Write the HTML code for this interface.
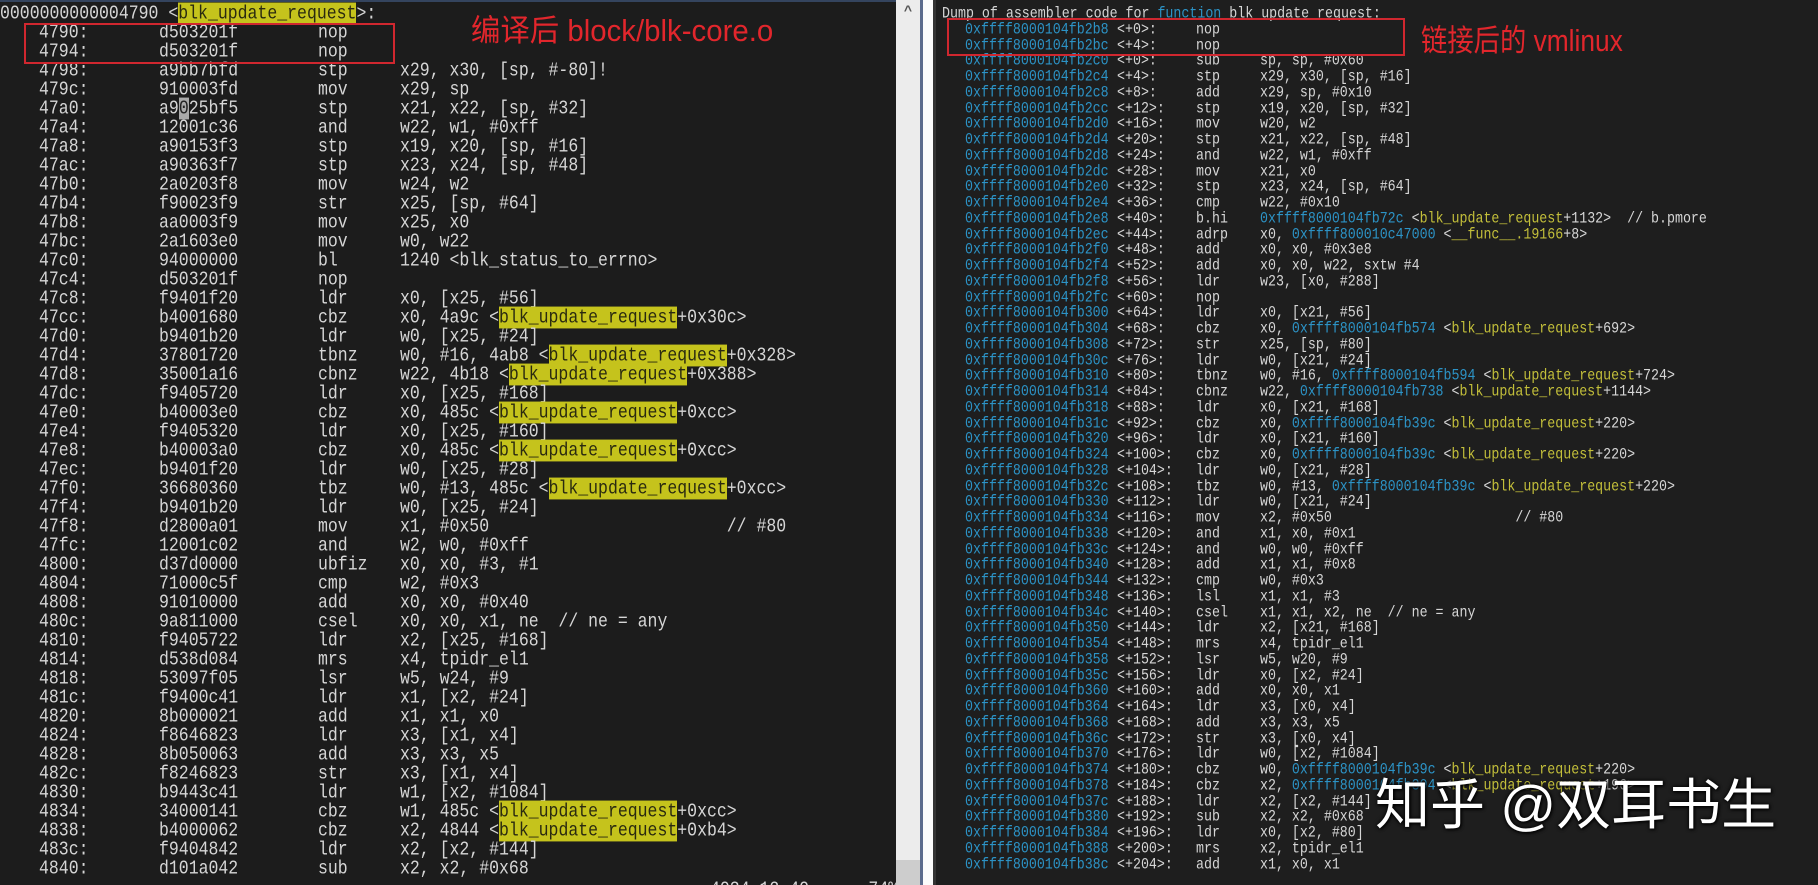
<!DOCTYPE html>
<html><head><meta charset="utf-8"><style>
*{margin:0;padding:0}
body{width:1818px;height:885px;overflow:hidden;background:#1c1c1c;position:relative;font-family:"Liberation Mono",monospace;color:#d6d6d6}
.L{position:absolute;left:0;top:0;width:896px;height:885px;background:#1c1c1c;font-size:16.5px;overflow:hidden}
.L .r{position:absolute;left:0;width:896px;height:19px;line-height:19px;white-space:pre;transform:scaleY(1.15)}
.L .a{position:absolute;left:39px}.L .h{position:absolute;left:159px}.L .m{position:absolute;left:318px}.L .o{position:absolute;left:400px;white-space:pre}
.hl{background:#c5c31c;color:#2a2a10}
.R{position:absolute;left:936px;top:0;width:882px;height:885px;background:#1e1e1e;font-size:13.3px}
.R .r{position:absolute;left:0;width:882px;height:16px;line-height:16px;white-space:pre;transform:scaleY(1.2)}
.R .a{position:absolute;left:29px;color:#2c93c6}.R .f{position:absolute;left:181px}.R .m{position:absolute;left:260px}.R .o{position:absolute;left:324px;white-space:pre}
.b{color:#2c93c6}.y{color:#c3bf3a}
.box{position:absolute;border:2px solid #d0272f}
.lab{position:absolute;color:#e2262c;font-family:"Liberation Sans","Noto Sans CJK SC",sans-serif;font-size:28px;white-space:nowrap;transform-origin:left center}
</style></head><body>
<div style="position:absolute;left:0;top:0;width:896px;height:2px;background:#34445e;z-index:3"></div>
<div class="L">
<div class="r" style="top:4px"><span style="position:absolute;left:0">0000000000004790 &lt;<span class="hl">blk_update_request</span>&gt;:</span></div>
<div class="r" style="top:23px"><span class="a">4790:</span><span class="h">d503201f</span><span class="m">nop</span></div>
<div class="r" style="top:42px"><span class="a">4794:</span><span class="h">d503201f</span><span class="m">nop</span></div>
<div class="r" style="top:61px"><span class="a">4798:</span><span class="h">a9bb7bfd</span><span class="m">stp</span><span class="o">x29, x30, [sp, #-80]!</span></div>
<div class="r" style="top:80px"><span class="a">479c:</span><span class="h">910003fd</span><span class="m">mov</span><span class="o">x29, sp</span></div>
<div class="r" style="top:99px"><span class="a">47a0:</span><span class="h">a9<span style="background:#aaa;color:#222">0</span>25bf5</span><span class="m">stp</span><span class="o">x21, x22, [sp, #32]</span></div>
<div class="r" style="top:118px"><span class="a">47a4:</span><span class="h">12001c36</span><span class="m">and</span><span class="o">w22, w1, #0xff</span></div>
<div class="r" style="top:137px"><span class="a">47a8:</span><span class="h">a90153f3</span><span class="m">stp</span><span class="o">x19, x20, [sp, #16]</span></div>
<div class="r" style="top:156px"><span class="a">47ac:</span><span class="h">a90363f7</span><span class="m">stp</span><span class="o">x23, x24, [sp, #48]</span></div>
<div class="r" style="top:175px"><span class="a">47b0:</span><span class="h">2a0203f8</span><span class="m">mov</span><span class="o">w24, w2</span></div>
<div class="r" style="top:194px"><span class="a">47b4:</span><span class="h">f90023f9</span><span class="m">str</span><span class="o">x25, [sp, #64]</span></div>
<div class="r" style="top:213px"><span class="a">47b8:</span><span class="h">aa0003f9</span><span class="m">mov</span><span class="o">x25, x0</span></div>
<div class="r" style="top:232px"><span class="a">47bc:</span><span class="h">2a1603e0</span><span class="m">mov</span><span class="o">w0, w22</span></div>
<div class="r" style="top:251px"><span class="a">47c0:</span><span class="h">94000000</span><span class="m">bl</span><span class="o">1240 &lt;blk_status_to_errno&gt;</span></div>
<div class="r" style="top:270px"><span class="a">47c4:</span><span class="h">d503201f</span><span class="m">nop</span></div>
<div class="r" style="top:289px"><span class="a">47c8:</span><span class="h">f9401f20</span><span class="m">ldr</span><span class="o">x0, [x25, #56]</span></div>
<div class="r" style="top:308px"><span class="a">47cc:</span><span class="h">b4001680</span><span class="m">cbz</span><span class="o">x0, 4a9c &lt;<span class="hl">blk_update_request</span>+0x30c&gt;</span></div>
<div class="r" style="top:327px"><span class="a">47d0:</span><span class="h">b9401b20</span><span class="m">ldr</span><span class="o">w0, [x25, #24]</span></div>
<div class="r" style="top:346px"><span class="a">47d4:</span><span class="h">37801720</span><span class="m">tbnz</span><span class="o">w0, #16, 4ab8 &lt;<span class="hl">blk_update_request</span>+0x328&gt;</span></div>
<div class="r" style="top:365px"><span class="a">47d8:</span><span class="h">35001a16</span><span class="m">cbnz</span><span class="o">w22, 4b18 &lt;<span class="hl">blk_update_request</span>+0x388&gt;</span></div>
<div class="r" style="top:384px"><span class="a">47dc:</span><span class="h">f9405720</span><span class="m">ldr</span><span class="o">x0, [x25, #168]</span></div>
<div class="r" style="top:403px"><span class="a">47e0:</span><span class="h">b40003e0</span><span class="m">cbz</span><span class="o">x0, 485c &lt;<span class="hl">blk_update_request</span>+0xcc&gt;</span></div>
<div class="r" style="top:422px"><span class="a">47e4:</span><span class="h">f9405320</span><span class="m">ldr</span><span class="o">x0, [x25, #160]</span></div>
<div class="r" style="top:441px"><span class="a">47e8:</span><span class="h">b40003a0</span><span class="m">cbz</span><span class="o">x0, 485c &lt;<span class="hl">blk_update_request</span>+0xcc&gt;</span></div>
<div class="r" style="top:460px"><span class="a">47ec:</span><span class="h">b9401f20</span><span class="m">ldr</span><span class="o">w0, [x25, #28]</span></div>
<div class="r" style="top:479px"><span class="a">47f0:</span><span class="h">36680360</span><span class="m">tbz</span><span class="o">w0, #13, 485c &lt;<span class="hl">blk_update_request</span>+0xcc&gt;</span></div>
<div class="r" style="top:498px"><span class="a">47f4:</span><span class="h">b9401b20</span><span class="m">ldr</span><span class="o">w0, [x25, #24]</span></div>
<div class="r" style="top:517px"><span class="a">47f8:</span><span class="h">d2800a01</span><span class="m">mov</span><span class="o">x1, #0x50                        // #80</span></div>
<div class="r" style="top:536px"><span class="a">47fc:</span><span class="h">12001c02</span><span class="m">and</span><span class="o">w2, w0, #0xff</span></div>
<div class="r" style="top:555px"><span class="a">4800:</span><span class="h">d37d0000</span><span class="m">ubfiz</span><span class="o">x0, x0, #3, #1</span></div>
<div class="r" style="top:574px"><span class="a">4804:</span><span class="h">71000c5f</span><span class="m">cmp</span><span class="o">w2, #0x3</span></div>
<div class="r" style="top:593px"><span class="a">4808:</span><span class="h">91010000</span><span class="m">add</span><span class="o">x0, x0, #0x40</span></div>
<div class="r" style="top:612px"><span class="a">480c:</span><span class="h">9a811000</span><span class="m">csel</span><span class="o">x0, x0, x1, ne  // ne = any</span></div>
<div class="r" style="top:631px"><span class="a">4810:</span><span class="h">f9405722</span><span class="m">ldr</span><span class="o">x2, [x25, #168]</span></div>
<div class="r" style="top:650px"><span class="a">4814:</span><span class="h">d538d084</span><span class="m">mrs</span><span class="o">x4, tpidr_el1</span></div>
<div class="r" style="top:669px"><span class="a">4818:</span><span class="h">53097f05</span><span class="m">lsr</span><span class="o">w5, w24, #9</span></div>
<div class="r" style="top:688px"><span class="a">481c:</span><span class="h">f9400c41</span><span class="m">ldr</span><span class="o">x1, [x2, #24]</span></div>
<div class="r" style="top:707px"><span class="a">4820:</span><span class="h">8b000021</span><span class="m">add</span><span class="o">x1, x1, x0</span></div>
<div class="r" style="top:726px"><span class="a">4824:</span><span class="h">f8646823</span><span class="m">ldr</span><span class="o">x3, [x1, x4]</span></div>
<div class="r" style="top:745px"><span class="a">4828:</span><span class="h">8b050063</span><span class="m">add</span><span class="o">x3, x3, x5</span></div>
<div class="r" style="top:764px"><span class="a">482c:</span><span class="h">f8246823</span><span class="m">str</span><span class="o">x3, [x1, x4]</span></div>
<div class="r" style="top:783px"><span class="a">4830:</span><span class="h">b9443c41</span><span class="m">ldr</span><span class="o">w1, [x2, #1084]</span></div>
<div class="r" style="top:802px"><span class="a">4834:</span><span class="h">34000141</span><span class="m">cbz</span><span class="o">w1, 485c &lt;<span class="hl">blk_update_request</span>+0xcc&gt;</span></div>
<div class="r" style="top:821px"><span class="a">4838:</span><span class="h">b4000062</span><span class="m">cbz</span><span class="o">x2, 4844 &lt;<span class="hl">blk_update_request</span>+0xb4&gt;</span></div>
<div class="r" style="top:840px"><span class="a">483c:</span><span class="h">f9404842</span><span class="m">ldr</span><span class="o">x2, [x2, #144]</span></div>
<div class="r" style="top:859px"><span class="a">4840:</span><span class="h">d101a042</span><span class="m">sub</span><span class="o">x2, x2, #0x68</span></div>
<div class="r" style="top:880px"><span style="position:absolute;left:710px">4034,12-40      74%</span></div>
</div>
<div class="box" style="left:24px;top:23px;width:367px;height:37px"></div>
<div class="lab" style="left:471px;top:9px;transform:scaleX(1.05) scaleY(1.1)">编译后 block/blk-core.o</div>
<div style="position:absolute;left:896px;top:0;width:24px;height:885px;background:#ececec"></div>
<div style="position:absolute;left:896px;top:860px;width:24px;height:25px;background:#cdcdcd"></div>
<div style="position:absolute;left:900px;top:2px;width:16px;text-align:center;font:bold 14px 'Liberation Sans',sans-serif;color:#555">^</div>
<div style="position:absolute;left:920px;top:0;width:3px;height:885px;background:#5b6b8c"></div>
<div style="position:absolute;left:923px;top:0;width:10px;height:885px;background:#fbfbfb"></div>
<div style="position:absolute;left:933px;top:0;width:3px;height:885px;background:#333"></div>
<div class="R">
<div class="r" style="top:6px"><span style="position:absolute;left:6px">Dump of assembler code for <span class="b">function</span> blk_update_request:</span></div>
<div class="r" style="top:22px"><span class="a">0xffff8000104fb2b8</span><span class="f">&lt;+0&gt;:</span><span class="m">nop</span></div>
<div class="r" style="top:38px"><span class="a">0xffff8000104fb2bc</span><span class="f">&lt;+4&gt;:</span><span class="m">nop</span></div>
<div class="r" style="top:53px"><span class="a">0xffff8000104fb2c0</span><span class="f">&lt;+0&gt;:</span><span class="m">sub</span><span class="o">sp, sp, #0x60</span></div>
<div class="r" style="top:69px"><span class="a">0xffff8000104fb2c4</span><span class="f">&lt;+4&gt;:</span><span class="m">stp</span><span class="o">x29, x30, [sp, #16]</span></div>
<div class="r" style="top:85px"><span class="a">0xffff8000104fb2c8</span><span class="f">&lt;+8&gt;:</span><span class="m">add</span><span class="o">x29, sp, #0x10</span></div>
<div class="r" style="top:101px"><span class="a">0xffff8000104fb2cc</span><span class="f">&lt;+12&gt;:</span><span class="m">stp</span><span class="o">x19, x20, [sp, #32]</span></div>
<div class="r" style="top:116px"><span class="a">0xffff8000104fb2d0</span><span class="f">&lt;+16&gt;:</span><span class="m">mov</span><span class="o">w20, w2</span></div>
<div class="r" style="top:132px"><span class="a">0xffff8000104fb2d4</span><span class="f">&lt;+20&gt;:</span><span class="m">stp</span><span class="o">x21, x22, [sp, #48]</span></div>
<div class="r" style="top:148px"><span class="a">0xffff8000104fb2d8</span><span class="f">&lt;+24&gt;:</span><span class="m">and</span><span class="o">w22, w1, #0xff</span></div>
<div class="r" style="top:164px"><span class="a">0xffff8000104fb2dc</span><span class="f">&lt;+28&gt;:</span><span class="m">mov</span><span class="o">x21, x0</span></div>
<div class="r" style="top:179px"><span class="a">0xffff8000104fb2e0</span><span class="f">&lt;+32&gt;:</span><span class="m">stp</span><span class="o">x23, x24, [sp, #64]</span></div>
<div class="r" style="top:195px"><span class="a">0xffff8000104fb2e4</span><span class="f">&lt;+36&gt;:</span><span class="m">cmp</span><span class="o">w22, #0x10</span></div>
<div class="r" style="top:211px"><span class="a">0xffff8000104fb2e8</span><span class="f">&lt;+40&gt;:</span><span class="m">b.hi</span><span class="o"><span class="b">0xffff8000104fb72c</span> &lt;<span class="y">blk_update_request</span>+1132&gt;  // b.pmore</span></div>
<div class="r" style="top:227px"><span class="a">0xffff8000104fb2ec</span><span class="f">&lt;+44&gt;:</span><span class="m">adrp</span><span class="o">x0, <span class="b">0xffff800010c47000</span> &lt;<span class="y">__func__.19166</span>+8&gt;</span></div>
<div class="r" style="top:242px"><span class="a">0xffff8000104fb2f0</span><span class="f">&lt;+48&gt;:</span><span class="m">add</span><span class="o">x0, x0, #0x3e8</span></div>
<div class="r" style="top:258px"><span class="a">0xffff8000104fb2f4</span><span class="f">&lt;+52&gt;:</span><span class="m">add</span><span class="o">x0, x0, w22, sxtw #4</span></div>
<div class="r" style="top:274px"><span class="a">0xffff8000104fb2f8</span><span class="f">&lt;+56&gt;:</span><span class="m">ldr</span><span class="o">w23, [x0, #288]</span></div>
<div class="r" style="top:290px"><span class="a">0xffff8000104fb2fc</span><span class="f">&lt;+60&gt;:</span><span class="m">nop</span></div>
<div class="r" style="top:305px"><span class="a">0xffff8000104fb300</span><span class="f">&lt;+64&gt;:</span><span class="m">ldr</span><span class="o">x0, [x21, #56]</span></div>
<div class="r" style="top:321px"><span class="a">0xffff8000104fb304</span><span class="f">&lt;+68&gt;:</span><span class="m">cbz</span><span class="o">x0, <span class="b">0xffff8000104fb574</span> &lt;<span class="y">blk_update_request</span>+692&gt;</span></div>
<div class="r" style="top:337px"><span class="a">0xffff8000104fb308</span><span class="f">&lt;+72&gt;:</span><span class="m">str</span><span class="o">x25, [sp, #80]</span></div>
<div class="r" style="top:353px"><span class="a">0xffff8000104fb30c</span><span class="f">&lt;+76&gt;:</span><span class="m">ldr</span><span class="o">w0, [x21, #24]</span></div>
<div class="r" style="top:368px"><span class="a">0xffff8000104fb310</span><span class="f">&lt;+80&gt;:</span><span class="m">tbnz</span><span class="o">w0, #16, <span class="b">0xffff8000104fb594</span> &lt;<span class="y">blk_update_request</span>+724&gt;</span></div>
<div class="r" style="top:384px"><span class="a">0xffff8000104fb314</span><span class="f">&lt;+84&gt;:</span><span class="m">cbnz</span><span class="o">w22, <span class="b">0xffff8000104fb738</span> &lt;<span class="y">blk_update_request</span>+1144&gt;</span></div>
<div class="r" style="top:400px"><span class="a">0xffff8000104fb318</span><span class="f">&lt;+88&gt;:</span><span class="m">ldr</span><span class="o">x0, [x21, #168]</span></div>
<div class="r" style="top:416px"><span class="a">0xffff8000104fb31c</span><span class="f">&lt;+92&gt;:</span><span class="m">cbz</span><span class="o">x0, <span class="b">0xffff8000104fb39c</span> &lt;<span class="y">blk_update_request</span>+220&gt;</span></div>
<div class="r" style="top:431px"><span class="a">0xffff8000104fb320</span><span class="f">&lt;+96&gt;:</span><span class="m">ldr</span><span class="o">x0, [x21, #160]</span></div>
<div class="r" style="top:447px"><span class="a">0xffff8000104fb324</span><span class="f">&lt;+100&gt;:</span><span class="m">cbz</span><span class="o">x0, <span class="b">0xffff8000104fb39c</span> &lt;<span class="y">blk_update_request</span>+220&gt;</span></div>
<div class="r" style="top:463px"><span class="a">0xffff8000104fb328</span><span class="f">&lt;+104&gt;:</span><span class="m">ldr</span><span class="o">w0, [x21, #28]</span></div>
<div class="r" style="top:479px"><span class="a">0xffff8000104fb32c</span><span class="f">&lt;+108&gt;:</span><span class="m">tbz</span><span class="o">w0, #13, <span class="b">0xffff8000104fb39c</span> &lt;<span class="y">blk_update_request</span>+220&gt;</span></div>
<div class="r" style="top:494px"><span class="a">0xffff8000104fb330</span><span class="f">&lt;+112&gt;:</span><span class="m">ldr</span><span class="o">w0, [x21, #24]</span></div>
<div class="r" style="top:510px"><span class="a">0xffff8000104fb334</span><span class="f">&lt;+116&gt;:</span><span class="m">mov</span><span class="o">x2, #0x50                       // #80</span></div>
<div class="r" style="top:526px"><span class="a">0xffff8000104fb338</span><span class="f">&lt;+120&gt;:</span><span class="m">and</span><span class="o">x1, x0, #0x1</span></div>
<div class="r" style="top:542px"><span class="a">0xffff8000104fb33c</span><span class="f">&lt;+124&gt;:</span><span class="m">and</span><span class="o">w0, w0, #0xff</span></div>
<div class="r" style="top:557px"><span class="a">0xffff8000104fb340</span><span class="f">&lt;+128&gt;:</span><span class="m">add</span><span class="o">x1, x1, #0x8</span></div>
<div class="r" style="top:573px"><span class="a">0xffff8000104fb344</span><span class="f">&lt;+132&gt;:</span><span class="m">cmp</span><span class="o">w0, #0x3</span></div>
<div class="r" style="top:589px"><span class="a">0xffff8000104fb348</span><span class="f">&lt;+136&gt;:</span><span class="m">lsl</span><span class="o">x1, x1, #3</span></div>
<div class="r" style="top:605px"><span class="a">0xffff8000104fb34c</span><span class="f">&lt;+140&gt;:</span><span class="m">csel</span><span class="o">x1, x1, x2, ne  // ne = any</span></div>
<div class="r" style="top:620px"><span class="a">0xffff8000104fb350</span><span class="f">&lt;+144&gt;:</span><span class="m">ldr</span><span class="o">x2, [x21, #168]</span></div>
<div class="r" style="top:636px"><span class="a">0xffff8000104fb354</span><span class="f">&lt;+148&gt;:</span><span class="m">mrs</span><span class="o">x4, tpidr_el1</span></div>
<div class="r" style="top:652px"><span class="a">0xffff8000104fb358</span><span class="f">&lt;+152&gt;:</span><span class="m">lsr</span><span class="o">w5, w20, #9</span></div>
<div class="r" style="top:668px"><span class="a">0xffff8000104fb35c</span><span class="f">&lt;+156&gt;:</span><span class="m">ldr</span><span class="o">x0, [x2, #24]</span></div>
<div class="r" style="top:683px"><span class="a">0xffff8000104fb360</span><span class="f">&lt;+160&gt;:</span><span class="m">add</span><span class="o">x0, x0, x1</span></div>
<div class="r" style="top:699px"><span class="a">0xffff8000104fb364</span><span class="f">&lt;+164&gt;:</span><span class="m">ldr</span><span class="o">x3, [x0, x4]</span></div>
<div class="r" style="top:715px"><span class="a">0xffff8000104fb368</span><span class="f">&lt;+168&gt;:</span><span class="m">add</span><span class="o">x3, x3, x5</span></div>
<div class="r" style="top:731px"><span class="a">0xffff8000104fb36c</span><span class="f">&lt;+172&gt;:</span><span class="m">str</span><span class="o">x3, [x0, x4]</span></div>
<div class="r" style="top:746px"><span class="a">0xffff8000104fb370</span><span class="f">&lt;+176&gt;:</span><span class="m">ldr</span><span class="o">w0, [x2, #1084]</span></div>
<div class="r" style="top:762px"><span class="a">0xffff8000104fb374</span><span class="f">&lt;+180&gt;:</span><span class="m">cbz</span><span class="o">w0, <span class="b">0xffff8000104fb39c</span> &lt;<span class="y">blk_update_request</span>+220&gt;</span></div>
<div class="r" style="top:778px"><span class="a">0xffff8000104fb378</span><span class="f">&lt;+184&gt;:</span><span class="m">cbz</span><span class="o">x2, <span class="b">0xffff8000104fb394</span> &lt;<span class="y">blk_update_request</span>+196&gt;</span></div>
<div class="r" style="top:794px"><span class="a">0xffff8000104fb37c</span><span class="f">&lt;+188&gt;:</span><span class="m">ldr</span><span class="o">x2, [x2, #144]</span></div>
<div class="r" style="top:809px"><span class="a">0xffff8000104fb380</span><span class="f">&lt;+192&gt;:</span><span class="m">sub</span><span class="o">x2, x2, #0x68</span></div>
<div class="r" style="top:825px"><span class="a">0xffff8000104fb384</span><span class="f">&lt;+196&gt;:</span><span class="m">ldr</span><span class="o">x0, [x2, #80]</span></div>
<div class="r" style="top:841px"><span class="a">0xffff8000104fb388</span><span class="f">&lt;+200&gt;:</span><span class="m">mrs</span><span class="o">x2, tpidr_el1</span></div>
<div class="r" style="top:857px"><span class="a">0xffff8000104fb38c</span><span class="f">&lt;+204&gt;:</span><span class="m">add</span><span class="o">x1, x0, x1</span></div>
</div>
<div class="box" style="left:947px;top:18px;width:454px;height:34px"></div>
<div class="lab" style="left:1421px;top:19px;transform:scaleX(0.94) scaleY(1.1)">链接后的 vmlinux</div>
<div style="position:absolute;left:1375px;top:772px;font-family:'Liberation Sans','Noto Sans CJK SC',sans-serif;font-size:55px;line-height:66px;color:#fff;white-space:nowrap;text-shadow:0 0 4px #000,1px 1px 3px #000">知乎 @双耳书生</div>
</body></html>
